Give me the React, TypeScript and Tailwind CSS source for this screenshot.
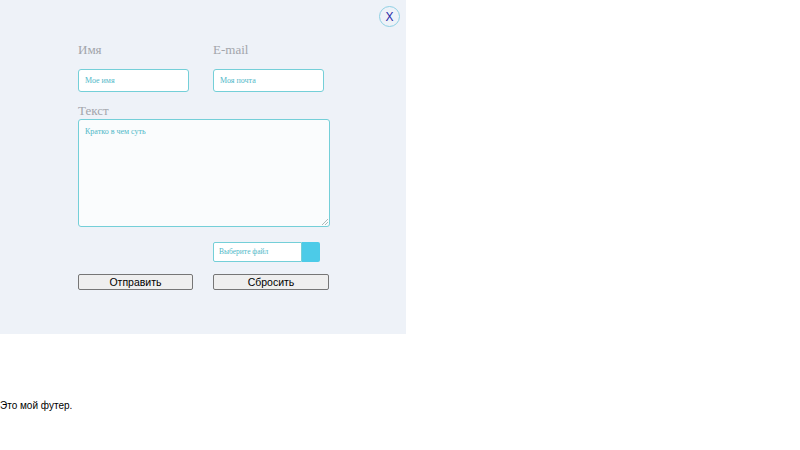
import React from "react";

const serif = { fontFamily: '"Liberation Serif", "Times New Roman", serif' };

export default function App() {
  return (
    <div className="w-[800px] h-[450px] bg-white" style={{ fontFamily: '"Liberation Sans", Arial, sans-serif' }}>
      <div className="relative w-[406px] h-[334px] bg-[#eef2f8]">
        <button className="absolute top-[6px] right-[6px] w-[21px] h-[21px] rounded-full border border-[#8fd0e4] text-[#2a2aa8] text-[12px] leading-none flex items-center justify-center">
          X
        </button>
        <form className="pl-[78px] pt-[42px] flex flex-col" style={serif}>
          <div className="flex gap-[25px]">
            <div className="w-[110px] flex flex-col">
              <label className="text-[13px] leading-[16px] text-[#a2a5ab]">Имя</label>
              <div className="mt-[11px] h-[23px] w-[111px] rounded-[3px] border border-[#74cfd8] bg-white text-[8px] text-[#4fb8c8] flex items-center pl-[6px]">
                Мое имя
              </div>
            </div>
            <div className="w-[111px] flex flex-col">
              <label className="text-[13px] leading-[16px] text-[#a2a5ab]">E-mail</label>
              <div className="mt-[11px] h-[23px] w-[111px] rounded-[3px] border border-[#74cfd8] bg-white text-[8px] text-[#4fb8c8] flex items-center pl-[6px]">
                Моя почта
              </div>
            </div>
          </div>
          <label className="mt-[12px] text-[13px] leading-[14px] text-[#a2a5ab]">Текст</label>
          <div className="relative mt-[1px] w-[252px] h-[108px] rounded-[3px] border border-[#74cfd8] bg-[#fafcfd] text-[8px] text-[#4fb8c8] pl-[6px] pt-[6px]">
            Кратко в чем суть
            <svg className="absolute right-[1px] bottom-[1px]" width="6" height="6" viewBox="0 0 6 6">
              <path d="M6 0 L0 6 M6 3 L3 6" stroke="#9aa" strokeWidth="0.8" />
            </svg>
          </div>
          <div className="mt-[15px] ml-[135px] flex h-[20px]">
            <div className="w-[89px] h-[20px] border border-[#74cfd8] rounded-l-[2px] bg-white text-[7.5px] text-[#4fb8c8] flex items-center pl-[5px]">
              Выберите файл
            </div>
            <div className="w-[18px] h-[20px] bg-[#4ccbe8] rounded-r-[2px]" />
          </div>
          <div className="mt-[12px] flex gap-[20px]" style={{ fontFamily: '"Liberation Sans", Arial, sans-serif' }}>
            <button type="button" className="w-[115px] h-[16px] border border-[#767676] rounded-[2px] bg-[#efefef] text-[10.5px] leading-none text-black">
              Отправить
            </button>
            <button type="button" className="w-[116px] h-[16px] border border-[#767676] rounded-[2px] bg-[#efefef] text-[10.5px] leading-none text-black">
              Сбросить
            </button>
          </div>
        </form>
      </div>
      <div className="mt-[65px] text-[10px] leading-[14px] text-black">Это мой футер.</div>
    </div>
  );
}
